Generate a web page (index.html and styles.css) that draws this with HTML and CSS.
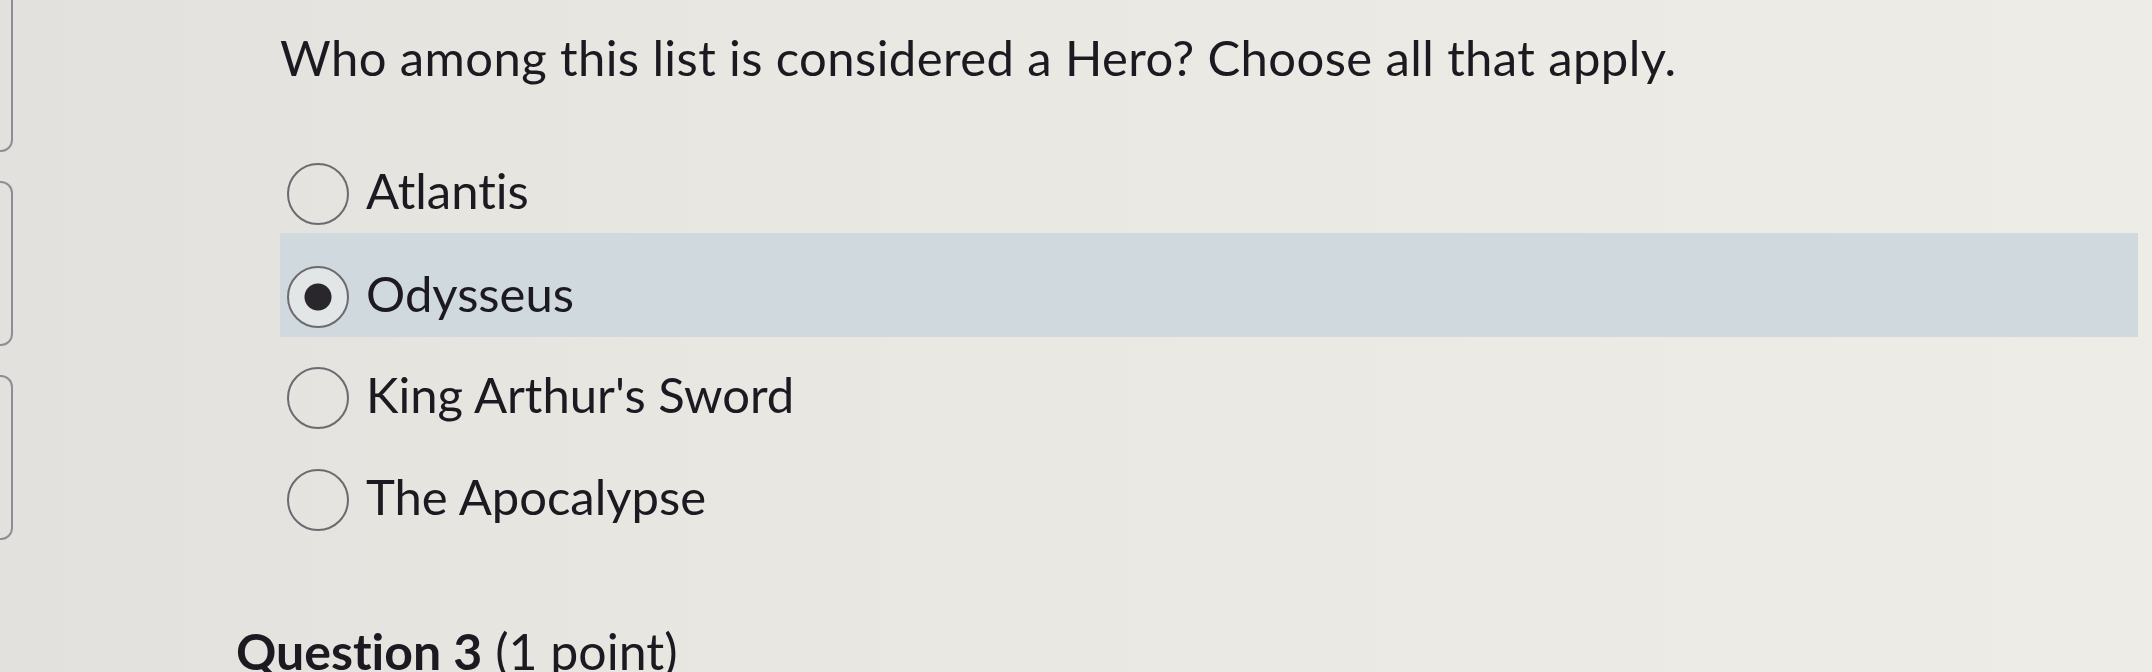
FILE: index.html
```html
<!DOCTYPE html>
<html lang="en">
<head>
  <meta charset="UTF-8" />
  <meta name="viewport" content="width=device-width, initial-scale=1.0"/>
  <title>Quiz - Question 2</title>
  <link rel="stylesheet" href="styles.css">
</head>
<body>

  <div class="page">
    <aside class="rail">
      <div class="rail-card first"></div>
      <div class="rail-card"></div>
      <div class="rail-card"></div>
    </aside>

    <main class="quiz">
      <section class="question">
        <h2 class="question-text">Who among this list is considered a Hero? Choose all that apply.</h2>

        <div class="options">
          <label class="option">
            <input type="radio" class="radio" name="q2" />
            <span>Atlantis</span>
          </label>
          <label class="option selected">
            <input type="radio" class="radio" name="q2" checked />
            <span>Odysseus</span>
          </label>
          <label class="option">
            <input type="radio" class="radio" name="q2" />
            <span>King Arthur's Sword</span>
          </label>
          <label class="option">
            <input type="radio" class="radio" name="q2" />
            <span>The Apocalypse</span>
          </label>
        </div>
      </section>

      <h3 class="question-title"><strong>Question 3</strong> (1 point)</h3>
    </main>
  </div>

</body>
</html>
```

FILE: styles.css
```css
* {
  margin: 0;
  padding: 0;
  box-sizing: border-box;
}

body {
  font-family: Lato, "Open Sans", sans-serif;
  font-variant-ligatures: none;
  color: #1c1920;
  background: linear-gradient(90deg, #e2e1dd 0%, #e8e7e2 35%, #ebeae5 70%, #edece7 100%);
  height: 672px;
  overflow: hidden;
}

.page {
  display: flex;
}

/* left navigation cards, mostly off screen */
.rail {
  width: 13px;
  display: flex;
  flex-direction: column;
  gap: 29px;
  margin-top: -20px;
}

.rail-card {
  height: 165px;
  border: 2px solid #8f8e94;
  border-left: none;
  border-radius: 0 12px 12px 0;
}

.rail-card.first {
  height: 172px;
}

.quiz {
  flex: 1;
  padding-left: 223px;
  padding-right: 14px;
}

.question {
  padding-left: 44px;
}

.question-text {
  font-size: 49px;
  font-weight: 400;
  line-height: 59px;
  letter-spacing: 0.4px;
  margin-top: 28px;
  margin-bottom: 44px;
}

.option {
  display: flex;
  align-items: center;
  gap: 17px;
  height: 102px;
  padding-top: 16px;
  padding-left: 7px;
  font-size: 49px;
  line-height: 59px;
  cursor: pointer;
}

.option.selected {
  height: 104px;
  margin-bottom: -2px;
  background-color: #d0d9dd;
}

.radio {
  appearance: none;
  -webkit-appearance: none;
  width: 62px;
  height: 62px;
  border: 2.5px solid #6c6a70;
  border-radius: 50%;
  background-color: transparent;
  margin-top: 8px;
  flex-shrink: 0;
}

.radio:checked {
  background: radial-gradient(circle, #29272c 0 13px, #e2e6e7 14px);
}

.question-title {
  font-size: 50px;
  font-weight: 400;
  line-height: 60px;
  margin-top: 82px;
}

.question-title strong {
  font-weight: 700;
}
```
